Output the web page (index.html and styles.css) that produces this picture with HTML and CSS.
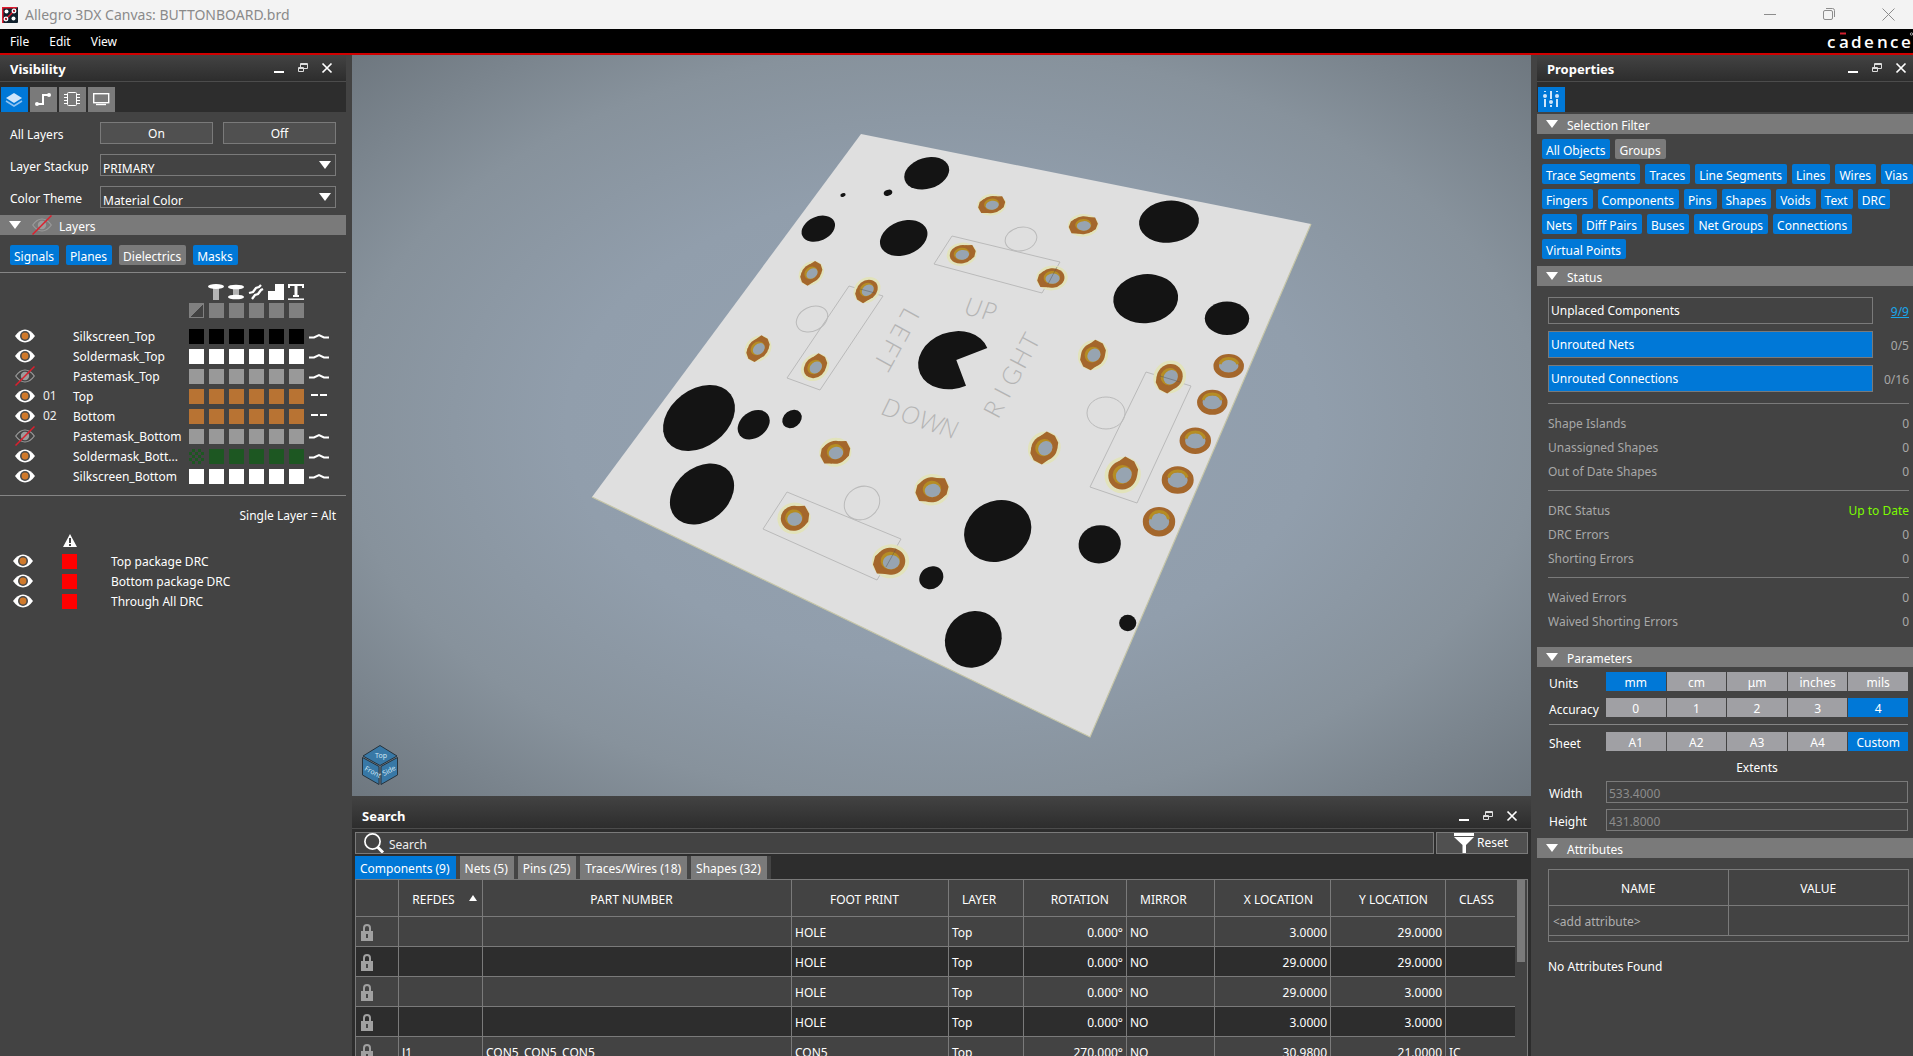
FILE: index.html
```html
<!DOCTYPE html>
<html lang="en">
<head>
<meta charset="utf-8">
<title>Allegro 3DX Canvas: BUTTONBOARD.brd</title>
<link rel="stylesheet" href="styles.css">
</head>
<body>
<svg class="defs" aria-hidden="true">
  <symbol id="eye" viewBox="0 0 20 14"><path d="M0 7Q4.500 .5 10 .5T20 7Q15.500 13.500 10 13.500T0 7z" fill="#fff"/><circle cx="10" cy="7" r="5" fill="#4a4a4a"/><circle cx="10" cy="7" r="3.400" fill="#d07a2c"/></symbol>
  <symbol id="eye-off" viewBox="0 0 20 20"><path d="M.7 10Q5 4 10 4t9.300 6Q15 16 10 16T.7 10z" fill="none" stroke="#9b9b9b" stroke-width="1.200"/><circle cx="10" cy="10" r="4.200" fill="#9b9b9b"/><path d="M.5 19.500L19.500 .5" stroke="#dd1f2d" stroke-width="1.500"/></symbol>
  <symbol id="tri" viewBox="0 0 12 8"><path d="M0 0h12L6 8z" fill="#fff"/></symbol>
  <symbol id="wave" viewBox="0 0 20 6"><path d="M0 4.500h5L10 2l5 2.500h5" fill="none" stroke="#fff" stroke-width="2"/></symbol>
  <symbol id="dash" viewBox="0 0 20 6"><path d="M2 2h7M11 2h7" stroke="#fff" stroke-width="2"/></symbol>
  <symbol id="p-min" viewBox="0 0 12 12"><path d="M1 10h10" stroke="#fff" stroke-width="2"/></symbol>
  <symbol id="p-max" viewBox="0 0 12 12"><path d="M3.500 5V1.500h7v5H7M3.500 2.500h7" fill="none" stroke="#ddd"/><path d="M1.500 5.500h5v4h-5zM1.500 6.500h5" fill="none" stroke="#ddd"/></symbol>
  <symbol id="p-close" viewBox="0 0 12 12"><path d="M1.500 1.500l9 9M10.500 1.500l-9 9" stroke="#fff" stroke-width="1.700"/></symbol>
  <symbol id="lock" viewBox="0 0 12 17"><path d="M3 8V4q0-3 3-3t3 3v4" fill="none" stroke="#a0a0a0" stroke-width="2"/><path d="M0 7h12v10H0z" fill="#a0a0a0"/><path d="M5 10h2v4H5z" fill="#444"/></symbol>
  <g id="pad"><circle r="12.600" fill="#e2e3bb"/><circle r="10" fill="#a4672c"/><circle cy="-.5" r="6.600" fill="#b58d24"/><ellipse cx=".4" cy=".7" rx="5.700" ry="5.300" fill="#97a4b1"/></g>
  <path id="tab-e" d="M4-9l6 1 2 7-2 6-4 3 2-8z" fill="#a4672c"/>
  <path id="tab-w" d="M-4 9l-6-1-2-7 2-6 4-3-2 8z" fill="#a4672c"/>
</svg>

<header class="titlebar">
  <svg class="app-icon" viewBox="0 0 16 16"><rect width="16" height="16" rx="1" fill="#10202c"/><path d="M.7 16V.7H15M3 13L13 3" fill="none" stroke="#e01a2e" stroke-width="1.500"/><circle cx="4.500" cy="4.500" r="2" fill="#fff"/><circle cx="11.500" cy="11.500" r="2" fill="#fff"/><circle cx="12" cy="4" r="1.800" fill="none" stroke="#fff" stroke-width="1.300"/><circle cx="4" cy="12" r="1.800" fill="none" stroke="#fff" stroke-width="1.300"/></svg>
  <h1>Allegro 3DX Canvas: BUTTONBOARD.brd</h1>
  <div class="win-controls">
    <button aria-label="Minimize"><svg viewBox="0 0 13 13"><path d="M0 6.500h12" stroke="#8c8c8c"/></svg></button>
    <button aria-label="Restore"><svg viewBox="0 0 13 13"><rect x=".5" y="2.500" width="9" height="9" rx="1.500" fill="none" stroke="#8c8c8c"/><path d="M3 .5h6.500q2 0 2 2V9" fill="none" stroke="#8c8c8c"/></svg></button>
    <button aria-label="Close"><svg viewBox="0 0 13 13"><path d="M.5 .5l12 12M12.500 .5l-12 12" stroke="#8c8c8c"/></svg></button>
  </div>
</header>
<nav class="menubar">
  <button>File</button><button>Edit</button><button>View</button>
  <svg class="brand" viewBox="0 0 86 24"><text x="0 12 24 37 50 63 74" y="19">cadence</text><path d="M13 4.500h6" stroke="#d3202f" stroke-width="2"/><circle cx="84.500" cy="5" r="1.200" fill="none" stroke="#fff" stroke-width=".6"/></svg>
</nav>

<main class="workspace">
  <aside class="panel left">
    <header class="panel-head"><h2>Visibility</h2><div class="panel-btns"><button aria-label="Minimize"><svg><use href="#p-min"/></svg></button><button aria-label="Float"><svg><use href="#p-max"/></svg></button><button aria-label="Close"><svg><use href="#p-close"/></svg></button></div></header>
    <div class="icon-tabs">
      <button class="on" aria-label="Layers"><svg viewBox="0 0 27 25"><path d="M13 6l8 5-8 5-8-5z" fill="#cfe5fa"/><path d="M5 14l8 5 8-5" fill="none" stroke="#8fc3f2" stroke-width="1.500"/></svg></button>
      <button aria-label="Nets"><svg viewBox="0 0 27 25"><path d="M7 17h6V8h6" fill="none" stroke="#fff" stroke-width="2"/><circle cx="7" cy="17" r="2" fill="#fff"/><circle cx="19" cy="8" r="2" fill="#fff"/></svg></button>
      <button aria-label="Components"><svg viewBox="0 0 27 25"><rect x="8.500" y="5.500" width="9" height="13" rx="1" fill="none" stroke="#fff"/><path d="M5 7.500h3M5 10.500h3M5 13.500h3M5 16.500h3M18 7.500h3M18 10.500h3M18 13.500h3M18 16.500h3" stroke="#fff"/></svg></button>
      <button aria-label="Display"><svg viewBox="0 0 27 25"><rect x="5.700" y="6.700" width="15" height="9" fill="none" stroke="#fff" stroke-width="1.400"/><path d="M8 17.500h10" stroke="#fff" stroke-width="1.400"/></svg></button>
    </div>
    <div class="form">
      <span>All Layers</span><div class="pair"><button class="btn">On</button><button class="btn">Off</button></div>
      <label for="stackup">Layer Stackup</label><div class="select"><select id="stackup"><option>PRIMARY</option></select><svg><use href="#tri"/></svg></div>
      <label for="theme">Color Theme</label><div class="select"><select id="theme"><option>Material Color</option></select><svg><use href="#tri"/></svg></div>
    </div>
    <h3 class="section"><svg class="tri"><use href="#tri"/></svg><svg class="eye-off"><use href="#eye-off"/></svg><span>Layers</span></h3>
    <div class="chips layer-chips"><button class="chip">Signals</button><button class="chip">Planes</button><button class="chip off">Dielectrics</button><button class="chip">Masks</button></div>
    <hr>
    <div class="layers">
      <div class="row kinds"><b></b>
        <svg viewBox="0 0 16 16"><path d="M5 4h6v12H5z" fill="#b4b4b4"/><ellipse cx="8" cy="2.500" rx="8" ry="2.500" fill="#fff"/></svg>
        <svg viewBox="0 0 16 16"><path d="M5 4h6v9H5z" fill="#b4b4b4"/><ellipse cx="8" cy="3" rx="8" ry="2.300" fill="#fff"/><ellipse cx="8" cy="13" rx="8" ry="2.300" fill="#fff"/></svg>
        <svg viewBox="0 0 16 16"><path d="M1 9l4-1 3-4 3-1 2-2M4 15l3-4 3-1 3-4 2-1" fill="none" stroke="#fff" stroke-width="2.300"/></svg>
        <svg viewBox="0 0 16 16"><path d="M7 0h9v16H0V7h7z" fill="#fff"/></svg>
        <svg viewBox="0 0 16 16"><path d="M1 4V1h14v3M5 12h6" fill="none" stroke="#fff" stroke-width="2"/><path d="M8 1v11" stroke="#fff" stroke-width="3"/><path d="M0 15.200h16" stroke="#fff" stroke-width="1.500"/></svg>
      </div>
      <div class="row all c-all"><i class="half"></i><i></i><i></i><i></i><i></i><i></i></div>
      <div class="row c-black"><svg class="eye"><use href="#eye"/></svg><em></em><span>Silkscreen_Top</span><i></i><i></i><i></i><i></i><i></i><i></i><svg class="ln"><use href="#wave"/></svg></div>
      <div class="row c-white"><svg class="eye"><use href="#eye"/></svg><em></em><span>Soldermask_Top</span><i></i><i></i><i></i><i></i><i></i><i></i><svg class="ln"><use href="#wave"/></svg></div>
      <div class="row c-grey"><svg class="eye-off"><use href="#eye-off"/></svg><em></em><span>Pastemask_Top</span><i></i><i></i><i></i><i></i><i></i><i></i><svg class="ln"><use href="#wave"/></svg></div>
      <div class="row c-copper"><svg class="eye"><use href="#eye"/></svg><em>01</em><span>Top</span><i></i><i></i><i></i><i></i><i></i><i></i><svg class="ln"><use href="#dash"/></svg></div>
      <div class="row c-copper"><svg class="eye"><use href="#eye"/></svg><em>02</em><span>Bottom</span><i></i><i></i><i></i><i></i><i></i><i></i><svg class="ln"><use href="#dash"/></svg></div>
      <div class="row c-grey"><svg class="eye-off"><use href="#eye-off"/></svg><em></em><span>Pastemask_Bottom</span><i></i><i></i><i></i><i></i><i></i><i></i><svg class="ln"><use href="#wave"/></svg></div>
      <div class="row c-green"><svg class="eye"><use href="#eye"/></svg><em></em><span>Soldermask_Bott...</span><i class="check"></i><i></i><i></i><i></i><i></i><i></i><svg class="ln"><use href="#wave"/></svg></div>
      <div class="row c-white"><svg class="eye"><use href="#eye"/></svg><em></em><span>Silkscreen_Bottom</span><i></i><i></i><i></i><i></i><i></i><i></i><svg class="ln"><use href="#wave"/></svg></div>
    </div>
    <hr>
    <p class="hint">Single Layer = Alt</p>
    <div class="drc">
      <svg class="warn" viewBox="0 0 14 13"><path d="M7 0l7 13H0z" fill="#fff"/><path d="M7 4v5M7 10v2" stroke="#444" stroke-width="2"/></svg>
      <div class="drc-row"><svg><use href="#eye"/></svg><i></i><span>Top package DRC</span></div>
      <div class="drc-row"><svg><use href="#eye"/></svg><i></i><span>Bottom package DRC</span></div>
      <div class="drc-row"><svg><use href="#eye"/></svg><i></i><span>Through All DRC</span></div>
    </div>
  </aside>

  <section class="center">
    <div class="viewport">
      <svg class="scene" viewBox="352 55 1179 741" preserveAspectRatio="xMidYMid slice">
        <path d="M861 134L1311 224 1090 737 592 497z" fill="#dfdfdf"/>
        <path d="M1311 224L1090 737 592 497" fill="none" stroke="#c6c6a8" stroke-width="1.200"/>
        <g fill="none" stroke="#bababa">
          <path d="M849 286l34 10-63 94-33-12zM952 236l108 26-18 31-108-29zM1146 372l45 14-54 117-47-16zM787 492l114 47-24 41-114-51z"/>
          <ellipse rx="16.500" ry="12" transform="translate(812 319) rotate(-27)"/>
          <ellipse rx="16" ry="11.700" transform="translate(1021 239) rotate(-12)"/>
          <ellipse cx="1106" cy="413" rx="19" ry="16"/>
          <ellipse rx="18.500" ry="16" transform="translate(862 503) rotate(-35)"/>
        </g>
        <g class="silk">
          <text class="lean" transform="translate(963 314) rotate(14)" x="0 18" y="0">UP</text>
          <text class="lean" transform="translate(880 414) rotate(19)" x="0 20 39 61" y="0">DOWN</text>
          <text transform="translate(905 306) rotate(119)" x="0 18 36 52" y="0">LEFT</text>
          <text transform="translate(998 420) rotate(-62)" x="0 23 36 56 77" y="0">RIGHT</text>
        </g>
        <g fill="#141414">
          <ellipse rx="23" ry="15.500" transform="translate(926.700 173.300) rotate(-17)"/>
          <ellipse rx="2.700" ry="1.800" transform="translate(843 195) rotate(-20)"/>
          <ellipse rx="4.400" ry="2.900" transform="translate(888 192.700) rotate(-20)"/>
          <ellipse rx="17.500" ry="12" transform="translate(818.300 228.700) rotate(-24)"/>
          <ellipse rx="24.500" ry="17" transform="translate(903.700 238) rotate(-20)"/>
          <ellipse rx="39.600" ry="28.500" transform="translate(699 418) rotate(-37)"/>
          <ellipse rx="17.500" ry="13" transform="translate(753.700 424.700) rotate(-37)"/>
          <ellipse rx="10.500" ry="8.300" transform="translate(792 419) rotate(-37)"/>
          <ellipse rx="35.400" ry="26.700" transform="translate(702 494) rotate(-40)"/>
          <ellipse rx="12.500" ry="11" transform="translate(931.300 577.700) rotate(-35)"/>
          <ellipse rx="34.500" ry="30" transform="translate(997.700 531) rotate(-27)"/>
          <ellipse rx="21.200" ry="19.100" transform="translate(1099.700 544.300) rotate(-10)"/>
          <ellipse rx="29.500" ry="27.300" transform="translate(973.300 639.300) rotate(-45)"/>
          <ellipse rx="8.600" ry="8.200" transform="translate(1127.700 623)"/>
          <ellipse rx="30" ry="21" transform="translate(1169 221.700) rotate(-6)"/>
          <ellipse rx="32.500" ry="24.500" transform="translate(1145.700 298.700) rotate(-6)"/>
          <ellipse rx="22.200" ry="16.700" transform="translate(1227 318.300)"/>
          <path d="M966 385.700A36 28.300 -18 1 1 987.300 348L956.300 360z"/>
        </g>
        <g transform="translate(811.300 273.300) rotate(-40) scale(1.080 .88)"><use href="#pad"/><use href="#tab-e"/><use href="#tab-w"/></g>
        <g transform="translate(867 290) rotate(-40) scale(1.150 .95)"><use href="#pad"/><use href="#tab-w"/></g>
        <g transform="translate(758 348.700) rotate(-42) scale(1.150 .95)"><use href="#pad"/><use href="#tab-e"/><use href="#tab-w"/></g>
        <g transform="translate(815 367.300) rotate(-42) scale(1.200 1)"><use href="#pad"/><use href="#tab-e"/></g>
        <g transform="translate(835.300 452.300) rotate(-10) scale(1.280 1.150)"><use href="#pad"/><use href="#tab-e"/><use href="#tab-w"/></g>
        <g transform="translate(991.700 204.700) rotate(-8) scale(1.150 .85)"><use href="#pad"/><use href="#tab-e"/><use href="#tab-w"/></g>
        <g transform="translate(1083.300 225.300) rotate(-3) scale(1.220 .9)"><use href="#pad"/><use href="#tab-e"/><use href="#tab-w"/></g>
        <g transform="translate(961.700 254.300) rotate(-10) scale(1.200 .92)"><use href="#pad"/><use href="#tab-e"/></g>
        <g transform="translate(1052 278) rotate(-6) scale(1.250 .98)"><use href="#pad"/><use href="#tab-w"/></g>
        <g transform="translate(1093 355) rotate(-45) scale(1.250 1.150)"><use href="#pad"/><use href="#tab-e"/><use href="#tab-w"/></g>
        <g transform="translate(1169.700 377) rotate(-45) scale(1.350 1.250)"><use href="#pad"/><use href="#tab-w"/></g>
        <g transform="translate(1044.300 448) rotate(-45) scale(1.350 1.250)"><use href="#pad"/><use href="#tab-e"/><use href="#tab-w"/></g>
        <g transform="translate(1122.700 475) rotate(-45) scale(1.480 1.400)"><use href="#pad"/><use href="#tab-e"/></g>
        <g transform="translate(932 489.700) rotate(-6) scale(1.400 1.250)"><use href="#pad"/><use href="#tab-e"/><use href="#tab-w"/></g>
        <g transform="translate(794 518.300) rotate(-12) scale(1.320 1.250)"><use href="#pad"/><use href="#tab-e"/></g>
        <g transform="translate(890.500 561.300) rotate(-6) scale(1.480 1.350)"><use href="#pad"/><use href="#tab-w"/></g>
        <g fill="#97a4b1" stroke="#a4672c">
          <ellipse cx="1228.700" cy="366" rx="12.500" ry="9.300" stroke-width="5.500"/><ellipse cx="1212.300" cy="402.300" rx="12.500" ry="9.800" stroke-width="5.500"/><ellipse cx="1195.300" cy="440.700" rx="13" ry="10.500" stroke-width="5.500"/><ellipse cx="1177.700" cy="480" rx="13" ry="10.800" stroke-width="6"/><ellipse cx="1159" cy="521.700" rx="13.200" ry="11.800" stroke-width="6"/>
          <path fill="none" stroke="#b58d24" stroke-width="3" d="M1220 364q2-5.500 8.700-5.500t9.300 5.500M1203 400q2-6 9.300-6t9.300 6M1186 438.500q2-6.500 9.300-6.500t9.300 6.500M1168.500 477.500q2-6.500 9.300-6.500t9.300 6.500M1150 519q2-7.500 9.300-7.500t9.300 7.500"/>
        </g>
        <path fill="none" stroke="#555" stroke-opacity=".45" d="M860 289l15 4M1057 267l-9 17M1160 376l20 6M896 549l-10 18"/>
      </svg>
      <svg class="cube" viewBox="0 0 36 40"><path d="M18 .5l17 10.500-17 9.500L1 11zM.5 12.500L17 21.500v18L.5 30zM35.500 12.500L19 21.500v18L35.500 30z" fill="#3878a6" stroke="#26333d"/><g><text x="13" y="13">Top</text><text transform="translate(2 25) rotate(28)">Front</text><text transform="translate(22 31) rotate(-28)">Side</text></g></svg>
    </div>
    <section class="search">
      <header class="panel-head tall"><h2>Search</h2><div class="panel-btns"><button aria-label="Minimize"><svg><use href="#p-min"/></svg></button><button aria-label="Float"><svg><use href="#p-max"/></svg></button><button aria-label="Close"><svg><use href="#p-close"/></svg></button></div></header>
      <div class="search-bar">
        <label class="search-box"><svg viewBox="0 0 22 20"><circle cx="9.500" cy="8.500" r="7.600" fill="none" stroke="#fff" stroke-width="1.700"/><path d="M14.500 14l5.500 5.500" stroke="#fff" stroke-width="3"/></svg><input type="text" placeholder="Search"></label>
        <button class="btn reset"><svg viewBox="0 0 20 20"><path d="M0 0h20v3H0zM0 4h20l-8 8v8H8.500v-8z" fill="#fff"/></svg>Reset</button>
      </div>
      <div class="result-tabs"><button class="on">Components (9)</button><button>Nets (5)</button><button>Pins (25)</button><button>Traces/Wires (18)</button><button>Shapes (32)</button></div>
      <div class="table-wrap">
        <table class="parts">
          <colgroup><col class="w-lock"><col class="w-ref"><col><col class="w-foot"><col class="w-layer"><col class="w-rot"><col class="w-mir"><col class="w-x"><col class="w-y"><col class="w-class"></colgroup>
          <thead><tr><th></th><th class="sorted">REFDES<svg viewBox="0 0 8 6"><path d="M4 0l4 6H0z" fill="#fff"/></svg></th><th class="c">PART NUMBER</th><th class="c">FOOT PRINT</th><th class="l">LAYER</th><th class="r">ROTATION</th><th class="l">MIRROR</th><th class="r">X LOCATION</th><th class="r">Y LOCATION</th><th class="l">CLASS</th></tr></thead>
          <tbody>
            <tr><td><svg class="lock"><use href="#lock"/></svg></td><td></td><td></td><td>HOLE</td><td>Top</td><td class="num">0.000°</td><td>NO</td><td class="num">3.0000</td><td class="num">29.0000</td><td></td></tr>
            <tr><td><svg class="lock"><use href="#lock"/></svg></td><td></td><td></td><td>HOLE</td><td>Top</td><td class="num">0.000°</td><td>NO</td><td class="num">29.0000</td><td class="num">29.0000</td><td></td></tr>
            <tr><td><svg class="lock"><use href="#lock"/></svg></td><td></td><td></td><td>HOLE</td><td>Top</td><td class="num">0.000°</td><td>NO</td><td class="num">29.0000</td><td class="num">3.0000</td><td></td></tr>
            <tr><td><svg class="lock"><use href="#lock"/></svg></td><td></td><td></td><td>HOLE</td><td>Top</td><td class="num">0.000°</td><td>NO</td><td class="num">3.0000</td><td class="num">3.0000</td><td></td></tr>
            <tr><td><svg class="lock"><use href="#lock"/></svg></td><td>J1</td><td>CON5_CON5_CON5</td><td>CON5</td><td>Top</td><td class="num">270.000°</td><td>NO</td><td class="num">30.9800</td><td class="num">21.0000</td><td>IC</td></tr>
          </tbody>
        </table>
        <div class="scroll"><div class="thumb"></div></div>
      </div>
    </section>
  </section>

  <aside class="panel right">
    <header class="panel-head"><h2>Properties</h2><div class="panel-btns"><button aria-label="Minimize"><svg><use href="#p-min"/></svg></button><button aria-label="Float"><svg><use href="#p-max"/></svg></button><button aria-label="Close"><svg><use href="#p-close"/></svg></button></div></header>
    <div class="icon-tabs"><button class="on" aria-label="Properties"><svg viewBox="0 0 27 25"><path d="M7 4v1M7 12v8M13 4v8M13 18v2M19 4v1M19 12v8" stroke="#cfe5fa" stroke-width="2"/><circle cx="7" cy="9" r="2" fill="#cfe5fa"/><circle cx="13" cy="15" r="2" fill="#cfe5fa"/><circle cx="19" cy="9" r="2" fill="#cfe5fa"/></svg></button></div>
    <h3 class="section first"><svg class="tri"><use href="#tri"/></svg><span>Selection Filter</span></h3>
    <div class="filters">
      <div class="chips"><button class="chip">All Objects</button><button class="chip off">Groups</button></div>
      <div class="chips"><button class="chip">Trace Segments</button><button class="chip">Traces</button><button class="chip">Line Segments</button><button class="chip">Lines</button><button class="chip">Wires</button><button class="chip">Vias</button></div>
      <div class="chips"><button class="chip">Fingers</button><button class="chip">Components</button><button class="chip">Pins</button><button class="chip">Shapes</button><button class="chip">Voids</button><button class="chip">Text</button><button class="chip">DRC</button></div>
      <div class="chips"><button class="chip">Nets</button><button class="chip">Diff Pairs</button><button class="chip">Buses</button><button class="chip">Net Groups</button><button class="chip">Connections</button></div>
      <div class="chips"><button class="chip">Virtual Points</button></div>
    </div>
    <h3 class="section"><svg class="tri"><use href="#tri"/></svg><span>Status</span></h3>
    <div class="status">
      <div class="bar-row"><div class="bar">Unplaced Components</div><a href="#unplaced">9/9</a></div>
      <div class="bar-row"><div class="bar full">Unrouted Nets</div><span>0/5</span></div>
      <div class="bar-row"><div class="bar full">Unrouted Connections</div><span>0/16</span></div>
      <dl><div><dt>Shape Islands</dt><dd>0</dd></div><div><dt>Unassigned Shapes</dt><dd>0</dd></div><div><dt>Out of Date Shapes</dt><dd>0</dd></div></dl>
      <dl><div><dt>DRC Status</dt><dd class="ok">Up to Date</dd></div><div><dt>DRC Errors</dt><dd>0</dd></div><div><dt>Shorting Errors</dt><dd>0</dd></div></dl>
      <dl><div><dt>Waived Errors</dt><dd>0</dd></div><div><dt>Waived Shorting Errors</dt><dd>0</dd></div></dl>
    </div>
    <h3 class="section"><svg class="tri"><use href="#tri"/></svg><span>Parameters</span></h3>
    <div class="params">
      <div class="param"><span>Units</span><div class="seg"><button class="on">mm</button><button>cm</button><button>μm</button><button>inches</button><button>mils</button></div></div>
      <div class="param"><span>Accuracy</span><div class="seg"><button>0</button><button>1</button><button>2</button><button>3</button><button class="on">4</button></div></div>
      <hr>
      <div class="param"><span>Sheet</span><div class="seg"><button>A1</button><button>A2</button><button>A3</button><button>A4</button><button class="on">Custom</button></div></div>
      <p class="extents">Extents</p>
      <div class="param tall"><label for="w">Width</label><input id="w" type="text" value="533.4000" disabled></div>
      <div class="param tall"><label for="h">Height</label><input id="h" type="text" value="431.8000" disabled></div>
    </div>
    <h3 class="section"><svg class="tri"><use href="#tri"/></svg><span>Attributes</span></h3>
    <div class="attrs">
      <div class="attr-box"><table><thead><tr><th>NAME</th><th>VALUE</th></tr></thead><tbody><tr><td>&lt;add attribute&gt;</td><td></td></tr></tbody></table></div>
      <p>No Attributes Found</p>
    </div>
  </aside>
</main>
</body>
</html>
```
FILE: styles.css
```css
:root {
  --bg: #434343;
  --dark: #2d2d2d;
  --line: #7a7a7a;
  --grey: #7a7a7a;
  --blue: #0078d7;
}
* { box-sizing: border-box; }
body {
  margin: 0;
  height: 100vh;
  display: flex;
  flex-direction: column;
  overflow: hidden;
  background: var(--bg);
  color: #fff;
  font: 12px/20px "Noto Sans", "Open Sans", sans-serif;
}
h1, h2, h3, p, dl, dd { margin: 0; }
button, input, select { font: inherit; color: inherit; }
button { border: 0; padding: 0; background: none; }
svg { display: block; flex: none; }
.defs { position: absolute; width: 0; height: 0; }
hr { border: 0; height: 1px; margin: 0; background: #858585; }

.titlebar { display: flex; align-items: center; height: 29px; flex: none; background: #f3f3f3; color: #8a8a8a; padding-left: 2px; }
.app-icon { width: 16px; height: 16px; }
.titlebar h1 { font-size: 14px; font-weight: 400; margin-left: 7px; flex: 1; }
.win-controls { display: flex; gap: 46px; padding-right: 18px; }
.win-controls svg { width: 13px; height: 13px; }
.menubar { display: flex; align-items: center; height: 26px; flex: none; background: #000; border-bottom: 2px solid #d10000; padding-left: 10px; gap: 20px; }
.menubar button { padding-top: 2px; }
.brand { width: 86px; height: 24px; margin-left: auto; }
.brand text { font: 600 17px "Open Sans", sans-serif; fill: #fff; }

.workspace { flex: 1; display: flex; min-height: 0; }
.panel { flex: none; overflow: hidden; }
.left { width: 346px; margin-right: 6px; }
.right { width: 376px; margin-left: 6px; }
.center { flex: 1; min-width: 0; display: flex; flex-direction: column; }
.panel-head { display: flex; align-items: center; height: 27px; padding: 0 13px 0 10px; background: linear-gradient(#434343, #2d2d2d); border-bottom: 1px solid #4c4c4c; }
.right .panel-head { padding-right: 6px; }
.panel-head.tall { height: 33px; padding-top: 7px; }
.panel-head h2 { flex: 1; font-size: 13px; font-weight: 700; line-height: 22px; padding-top: 1px; }
.panel-btns { display: flex; gap: 12px; }
.panel-btns svg { width: 12px; height: 12px; }
.icon-tabs { display: flex; gap: 2px; height: 30px; padding: 5px 1px 0; background: var(--dark); }
.icon-tabs button { width: 27px; height: 25px; background: var(--grey); }
.icon-tabs svg { width: 27px; height: 25px; }
.icon-tabs .on { background: var(--blue); }

.form { display: grid; grid-template-columns: 80px 1fr; grid-auto-rows: 22px; gap: 10px; padding: 10px 10px 7px; line-height: 25px; white-space: nowrap; }
.pair { display: flex; gap: 10px; }
.btn { flex: 1; height: 22px; line-height: 22px; border: 1px solid var(--line); background: #505050; }
.select { position: relative; }
.select select { display: block; width: 100%; height: 22px; padding: 1px 2px 0; appearance: none; border: 1px solid var(--line); border-radius: 0; background: var(--bg); }
.select svg { position: absolute; right: 5px; top: 7px; width: 12px; height: 8px; pointer-events: none; }
.section { display: flex; align-items: center; height: 20px; padding-left: 9px; background: var(--grey); font-size: 12px; font-weight: 400; gap: 9px; }
.section .tri { width: 12px; height: 8px; }
.section .eye-off { width: 20px; height: 20px; margin-left: 4px; }
.section span { padding-top: 3px; }
.left .section { gap: 7px; }
.section.first { margin-top: 2px; }
.chips { display: flex; gap: 5px; }
.chip { flex: none; height: 20px; padding: 0 5px 0 4px; line-height: 23px; border-radius: 2px; background: var(--blue); white-space: nowrap; }
.chip.off { background: var(--grey); }
.layer-chips { gap: 7px; padding: 10px 10px 7px; }

.layers { padding: 11px 10px 9px 15px; }
.row { display: flex; align-items: center; height: 20px; gap: 5px; }
.row i { width: 15px; height: 15px; background: currentColor; flex: none; }
.row em { width: 25px; font-style: normal; margin-left: 3px; color: #eee; }
.row span { width: 111px; color: #fff; white-space: nowrap; padding-top: 1px; }
.row .eye { width: 20px; height: 14px; }
.row .eye-off { width: 20px; height: 20px; }
.row .ln { width: 20px; height: 6px; }
.kinds { height: 16px; gap: 4px; padding-left: 174px; }
.kinds b { width: 15px; }
.kinds svg { width: 16px; height: 16px; }
.all { padding-left: 174px; height: 20px; margin-bottom: 6px; }
.c-all { color: #808080; }
.row .half { background: linear-gradient(135deg, #808080 50%, #434343 50%); border: 1px solid #808080; }
.c-black { color: #000; }
.c-white { color: #fff; }
.c-grey { color: #999; }
.c-copper { color: #b87333; }
.c-green { color: #1d5722; }
.row .check { background: repeating-conic-gradient(#1d5722 0 25%, #434343 0 50%) 0 0 / 6px 6px; }
.hint { text-align: right; padding: 10px 10px 0; }
.drc { padding: 8px 13px; }
.warn { width: 14px; height: 13px; margin: 0 0 4px 50px; }
.drc-row { display: flex; align-items: center; height: 20px; }
.drc-row svg { width: 20px; height: 14px; }
.drc-row i { width: 15px; height: 15px; margin: 0 34px 0 29px; background: #f00; }
.drc-row span { padding-top: 2px; }

.viewport { position: relative; flex: 1; min-height: 0; background: radial-gradient(farthest-corner, #95a3b2 0, #919eac 45%, #87929c 72%, #6e777f 100%); }
.scene { position: absolute; width: 100%; height: 100%; }
.silk { fill: #b4b4b4; font: 300 25px Lato, "Open Sans", sans-serif; }
.silk .lean { font-style: italic; }
.cube { position: absolute; left: 10px; bottom: 11px; width: 36px; height: 40px; }
.cube text { font: 7px "Noto Sans", sans-serif; fill: #cfe6f5; }

.search { height: 260px; flex: none; overflow: hidden; background: var(--dark); }
.search-bar { display: flex; gap: 2px; padding: 3px 3px 2px; }
.search-box { flex: 1; display: flex; align-items: center; height: 22px; padding-left: 7px; gap: 2px; border: 1px solid var(--line); background: var(--bg); }
.search-box svg { width: 22px; height: 20px; }
.search-box input { flex: 1; border: 0; padding: 3px 2px 0; background: none; outline: 0; height: 20px; }
.search-box input::placeholder { color: #eee; opacity: 1; }
.reset { flex: none; width: 92px; display: flex; align-items: center; justify-content: center; gap: 3px; padding-right: 2px; line-height: 24px; }
.reset svg { width: 20px; height: 20px; }
.result-tabs { display: inline-flex; vertical-align: top; gap: 4px; margin-left: 3px; padding-right: 4px; background: #444; }
.result-tabs button { height: 23px; padding: 0 6px 0 5px; line-height: 25px; background: var(--grey); white-space: nowrap; }
.result-tabs .on { background: var(--blue); }
.table-wrap { display: flex; margin: 0 3px; border: solid var(--line); border-width: 1px 1px 0; background: var(--bg); }
table { border-collapse: separate; border-spacing: 0; table-layout: fixed; width: 100%; }
.parts { flex: 1; width: 0; }
.w-lock { width: 43px; }
.w-ref { width: 84px; }
.w-foot { width: 157px; }
.w-layer { width: 75px; }
.w-rot { width: 103px; }
.w-mir { width: 88px; }
.w-x { width: 116px; }
.w-y { width: 115px; }
.w-class { width: 69px; }
th, td { border: solid var(--line); border-width: 0 1px 1px 0; white-space: nowrap; font-weight: 400; }
th:last-child, td:last-child { border-right: 0; }
.parts th { height: 37px; padding: 4px 13px 0; }
.parts td { height: 30px; padding: 2px 3px 0; line-height: 20px; }
.parts .c { padding-right: 24px; }
.parts .l { text-align: left; }
.parts .r { text-align: right; padding-right: 17px; }
.parts .num { text-align: right; }
.parts tr:nth-child(even) td { background: var(--dark); }
.sorted svg { display: inline-block; width: 8px; height: 6px; margin: 0 -8px 3px 14px; }
.lock { width: 12px; height: 17px; margin-left: 2px; }
.scroll { width: 12px; padding: 0 2px; }
.thumb { height: 82px; background: var(--grey); }

.filters { display: grid; gap: 5px; padding: 5px 5px 7px; }
.status { padding: 11px 4px 13px 11px; color: #a8a8a8; }
.bar-row { display: flex; align-items: center; justify-content: space-between; margin-bottom: 7px; }
.bar-row a, .bar-row span { padding-top: 2px; }
.bar { width: 325px; height: 27px; padding: 3px 2px; line-height: 20px; border: 1px solid var(--line); color: #fff; }
.bar.full { background: var(--blue); }
.bar-row a { color: #1aa7ec; }
.status dl { border-top: 1px solid var(--line); padding-top: 8px; margin-top: 6px; }
.status .bar-row + dl { margin-top: 11px; }
.status dl div { display: flex; justify-content: space-between; height: 24px; line-height: 24px; }
.status .ok { color: #7cfc00; }
.params { padding: 5px 5px 7px 12px; display: grid; gap: 7px; }
.param { display: grid; grid-template-columns: 57px 1fr; height: 19px; line-height: 24px; }
.param.tall { height: 22px; line-height: 26px; }
.param.tall:last-child { margin-top: -1px; }
.seg { display: grid; grid-template-columns: repeat(5, 1fr); gap: 1px; }
.seg button { height: 19px; line-height: 21px; background: #a0a0a4; }
.seg .on { background: var(--blue); }
.extents { text-align: center; line-height: 20px; height: 16px; padding-left: 57px; }
.param input { width: 100%; min-width: 0; height: 22px; padding: 3px 2px 0; border: 1px solid var(--line); background: var(--bg); color: #8c8c8c; }
.attrs { padding: 11px 4px 0 11px; }
.attr-box { border: 1px solid var(--line); padding: 0 0 5px; }
.attrs th { height: 36px; padding-top: 3px; }
.attrs td { height: 30px; padding: 2px 4px 0; color: #b0b0b0; }
.attrs p { margin-top: 14px; line-height: 22px; }
```
